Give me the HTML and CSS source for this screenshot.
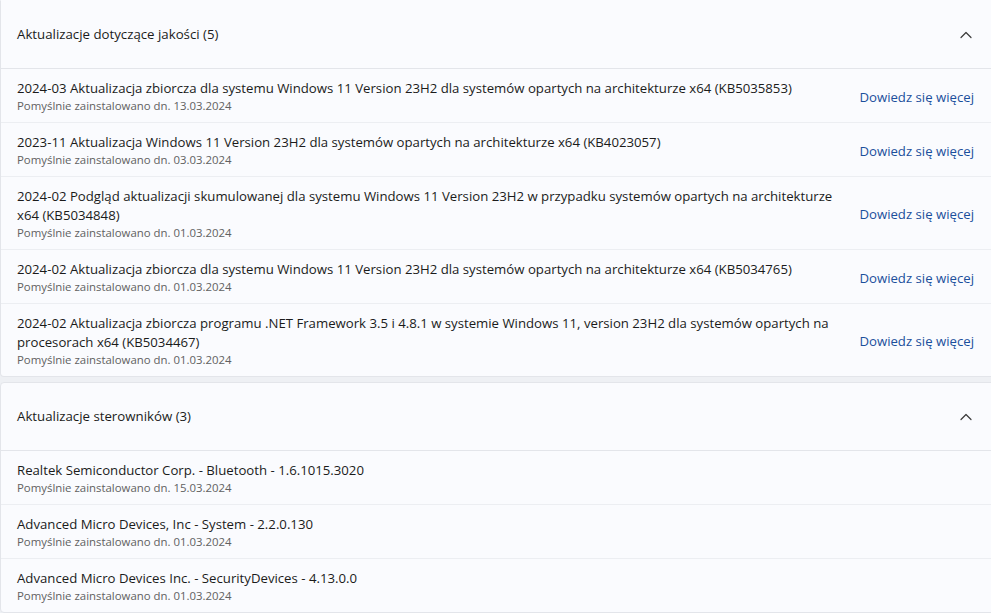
FILE: index.html
```html
<!DOCTYPE html>
<html lang="pl">
<head>
<meta charset="utf-8">
<title>Historia aktualizacji</title>
<link rel="stylesheet" href="styles.css">
</head>
<body>
<div class="page">
  <section class="expander first">
    <div class="exp-header">
      <span class="exp-title">Aktualizacje dotyczące jakości (5)</span>
      <svg class="chev" width="12" height="8" viewBox="0 0 12 8"><path d="M1 6.5 L6 1.5 L11 6.5" fill="none" stroke="#3a3a3a" stroke-width="1.2" stroke-linecap="round" stroke-linejoin="round"/></svg>
    </div>
    <div class="exp-body">
      <div class="row">
        <div class="row-text">
          <div class="row-title">2024-03 Aktualizacja zbiorcza dla systemu Windows 11 Version 23H2 dla systemów opartych na architekturze x64 (KB5035853)</div>
          <div class="row-sub">Pomyślnie zainstalowano dn. 13.03.2024</div>
        </div>
        <a class="row-link" href="#">Dowiedz się więcej</a>
      </div>
      <div class="row">
        <div class="row-text">
          <div class="row-title">2023-11 Aktualizacja Windows 11 Version 23H2 dla systemów opartych na architekturze x64 (KB4023057)</div>
          <div class="row-sub">Pomyślnie zainstalowano dn. 03.03.2024</div>
        </div>
        <a class="row-link" href="#">Dowiedz się więcej</a>
      </div>
      <div class="row">
        <div class="row-text">
          <div class="row-title">2024-02 Podgląd aktualizacji skumulowanej dla systemu Windows 11 Version 23H2 w przypadku systemów opartych na architekturze x64 (KB5034848)</div>
          <div class="row-sub">Pomyślnie zainstalowano dn. 01.03.2024</div>
        </div>
        <a class="row-link" href="#">Dowiedz się więcej</a>
      </div>
      <div class="row">
        <div class="row-text">
          <div class="row-title">2024-02 Aktualizacja zbiorcza dla systemu Windows 11 Version 23H2 dla systemów opartych na architekturze x64 (KB5034765)</div>
          <div class="row-sub">Pomyślnie zainstalowano dn. 01.03.2024</div>
        </div>
        <a class="row-link" href="#">Dowiedz się więcej</a>
      </div>
      <div class="row">
        <div class="row-text">
          <div class="row-title">2024-02 Aktualizacja zbiorcza programu .NET Framework 3.5 i 4.8.1 w systemie Windows 11, version 23H2 dla systemów opartych na procesorach x64 (KB5034467)</div>
          <div class="row-sub">Pomyślnie zainstalowano dn. 01.03.2024</div>
        </div>
        <a class="row-link" href="#">Dowiedz się więcej</a>
      </div>
    </div>
  </section>

  <section class="expander">
    <div class="exp-header">
      <span class="exp-title">Aktualizacje sterowników (3)</span>
      <svg class="chev" width="12" height="8" viewBox="0 0 12 8"><path d="M1 6.5 L6 1.5 L11 6.5" fill="none" stroke="#3a3a3a" stroke-width="1.2" stroke-linecap="round" stroke-linejoin="round"/></svg>
    </div>
    <div class="exp-body">
      <div class="row">
        <div class="row-text">
          <div class="row-title">Realtek Semiconductor Corp. - Bluetooth - 1.6.1015.3020</div>
          <div class="row-sub">Pomyślnie zainstalowano dn. 15.03.2024</div>
        </div>
      </div>
      <div class="row">
        <div class="row-text">
          <div class="row-title">Advanced Micro Devices, Inc - System - 2.2.0.130</div>
          <div class="row-sub">Pomyślnie zainstalowano dn. 01.03.2024</div>
        </div>
      </div>
      <div class="row">
        <div class="row-text">
          <div class="row-title">Advanced Micro Devices Inc. - SecurityDevices - 4.13.0.0</div>
          <div class="row-sub">Pomyślnie zainstalowano dn. 01.03.2024</div>
        </div>
      </div>
    </div>
  </section>
</div>
</body>
</html>
```

FILE: styles.css
```css
* { box-sizing: border-box; }

html, body {
  margin: 0;
  padding: 0;
  background: #eef0f4;
  overflow: hidden;
}

body {
  font-family: "Open Sans", "Noto Sans", "Liberation Sans", sans-serif;
  color: #1b1b1b;
  width: 991px;
  height: 613px;
}

.page {
  display: flex;
  flex-direction: column;
  gap: 5px;
  width: 1000px;
}

.expander {
  border: 1px solid #e3e5ea;
  border-radius: 4px;
  background: #fafbfe;
}

.expander.first {
  border-top-color: #fafbfe;
  border-radius: 0 0 4px 4px;
}

.exp-header {
  height: 67px;
  display: flex;
  align-items: center;
  justify-content: space-between;
  padding: 0 27px 1px 16px;
  font-size: 13.25px;
}

.chev {
  display: block;
  margin-top: 1px;
}

.exp-body {
  border-top: 1px solid #e3e5ea;
}

.row {
  display: flex;
  align-items: center;
  gap: 24px;
  padding: 10px 25px 8px 16px;
  min-height: 53px;
}

.row + .row {
  border-top: 1px solid #eceef2;
}

.row-text {
  flex: 1;
  min-width: 0;
}

.row-title {
  font-size: 13.2px;
  line-height: 19px;
  color: #1b1b1b;
}

.row-sub {
  font-size: 11.4px;
  line-height: 16px;
  color: #616161;
}

.row-link {
  flex: none;
  font-size: 13.2px;
  color: #1b4f9c;
  text-decoration: none;
}
```
